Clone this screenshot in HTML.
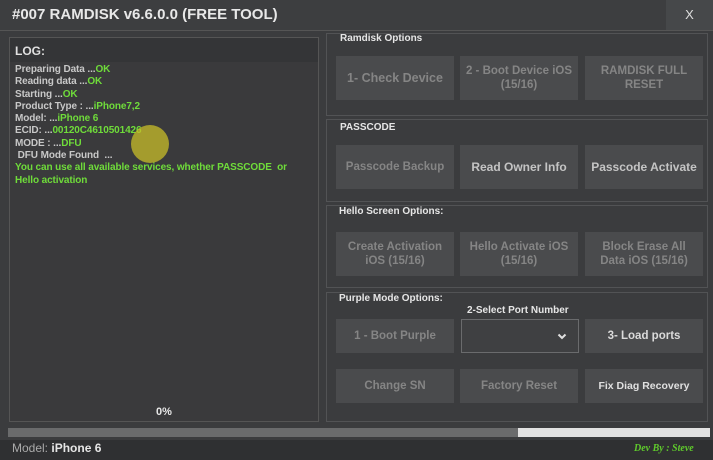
<!DOCTYPE html>
<html><head><meta charset="utf-8"><style>
*{box-sizing:border-box;margin:0;padding:0}
body{width:713px;height:460px;background:#3b3c3e;font-family:"Liberation Sans",sans-serif;position:relative;overflow:hidden;color:#ddd}
.a{position:absolute}
.title{left:0;top:0;width:713px;height:31px;background:#3d3e40;border-bottom:1px solid #555}
.title span{position:absolute;left:12px;top:6px;font-size:15px;font-weight:bold;color:#e8e8e8}
.x{left:666px;top:0;width:47px;height:30px;background:#46484a;color:#ddd;font-size:13px;text-align:center;line-height:30px}
.log{left:9px;top:37px;width:310px;height:385px;border:1px solid #555;background:#3a3a3c}
.loghd{left:0;top:0;width:308px;height:24px;background:#343537;font-size:12px;font-weight:bold;color:#e0e0e0;padding:6px 5px}
.lines{left:5px;top:26px;font-size:10px;font-weight:bold;line-height:12.3px;color:#c8c8c8;letter-spacing:-0.1px}
.g{color:#6fdc3a}
.grp{border:1px solid #525355;left:326px;width:382px}
.lbl{font-size:10px;font-weight:bold;color:#e6e6e6}
.b{position:absolute;background:#4a4b4d;color:#858585;font-size:11.5px;font-weight:bold;display:flex;align-items:center;justify-content:center;text-align:center;line-height:14px;width:118px}
.w{color:#c4c4c4}
</style></head><body>
<div class="a title"><span>#007 RAMDISK v6.6.0.0 (FREE TOOL)</span></div>
<div class="a x">X</div>
<div class="a log">
<div class="a loghd">LOG:</div>
<div class="a lines">Preparing Data ...<span class="g">OK</span><br>Reading data ...<span class="g">OK</span><br>Starting ...<span class="g">OK</span><br>Product Type : ...<span class="g">iPhone7,2</span><br>Model: ...<span class="g">iPhone 6</span><br>ECID: ...<span class="g">00120C4610501426</span><br>MODE : ...<span class="g">DFU</span><br>&nbsp;DFU Mode Found &nbsp;...<br><span class="g">You can use all available services, whether PASSCODE &nbsp;or<br>Hello activation</span></div>
<div class="a" style="left:121px;top:87px;width:38px;height:38px;border-radius:50%;background:rgba(200,190,40,.75)"></div>
<div class="a" style="left:146px;top:368px;font-size:11px;font-weight:bold;color:#e8e8e8">0%</div>
</div>
<div class="a grp" style="top:33px;height:83px"></div>
<div class="a lbl" style="left:340px;top:33px">Ramdisk Options</div>
<div class="b" style="left:336px;top:56px;height:44px;font-size:12.5px">1- Check Device</div>
<div class="b" style="left:460px;top:56px;height:44px">2 - Boot Device iOS<br>(15/16)</div>
<div class="b" style="left:585px;top:56px;height:44px">RAMDISK FULL<br>RESET</div>
<div class="a grp" style="top:119px;height:83px"></div>
<div class="a lbl" style="left:340px;top:122px">PASSCODE</div>
<div class="b" style="left:336px;top:145px;height:44px">Passcode Backup</div>
<div class="b w" style="left:460px;top:145px;height:44px;font-size:12px">Read Owner Info</div>
<div class="b w" style="left:585px;top:145px;height:44px;font-size:12px">Passcode Activate</div>
<div class="a grp" style="top:205px;height:83px"></div>
<div class="a lbl" style="left:339px;top:206px">Hello Screen Options:</div>
<div class="b" style="left:336px;top:232px;height:44px">Create Activation<br>iOS (15/16)</div>
<div class="b" style="left:460px;top:232px;height:44px">Hello Activate iOS<br>(15/16)</div>
<div class="b" style="left:585px;top:232px;height:44px">Block Erase All<br>Data iOS (15/16)</div>
<div class="a grp" style="top:292px;height:130px"></div>
<div class="a lbl" style="left:339px;top:293px">Purple Mode Options:</div>
<div class="a lbl" style="left:467px;top:305px">2-Select Port Number</div>
<div class="b" style="left:336px;top:319px;height:34px">1 - Boot Purple</div>
<div class="a" style="left:461px;top:319px;width:118px;height:34px;border:1px solid #6a6b6d;background:#3f4042">
<svg class="a" style="left:95px;top:13px" width="10" height="7" viewBox="0 0 10 7"><path d="M1.5 1.5 L5 5 L8.5 1.5" stroke="#e0e0e0" stroke-width="2" fill="none"/></svg></div>
<div class="b w" style="left:585px;top:319px;height:34px;color:#dadada">3- Load ports</div>
<div class="b" style="left:336px;top:369px;height:34px">Change SN</div>
<div class="b" style="left:460px;top:369px;height:34px">Factory Reset</div>
<div class="b" style="left:585px;top:369px;height:34px;color:#e0e0e0;font-size:10.5px">Fix Diag Recovery</div>
<div class="a" style="left:8px;top:428px;width:510px;height:9px;background:#6a6b6c"></div>
<div class="a" style="left:518px;top:428px;width:192px;height:9px;background:#e2e2e2"></div>
<div class="a" style="left:0;top:440px;width:713px;height:20px;background:#2f3032"></div>
<div class="a" style="left:12px;top:441px;font-size:12px;color:#aaa">Model: <b style="color:#e6e6e6">iPhone 6</b></div>
<div class="a" style="left:634px;top:443px;font-size:10px;font-style:italic;font-weight:bold;color:#5fc92c;font-family:'Liberation Serif',serif">Dev By : Steve</div>
</body></html>
